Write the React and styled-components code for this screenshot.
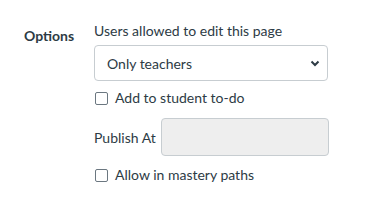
import React from 'react'
import styled, { createGlobalStyle } from 'styled-components'

const Global = createGlobalStyle`
  html, body { margin: 0; padding: 0; background: #fff; }
  body { font-family: Lato, "Liberation Sans", sans-serif; color: #2d3b45; }
`

const Page = styled.div`
  display: flex;
  padding: 21px 0 0 24px;
  font-size: 14px;
`

const SideLabel = styled.div`
  width: 70px;
  font-weight: bold;
  padding-top: 5px;
  line-height: 20px;
`

const Column = styled.div`
  width: 234px;
  display: flex;
  flex-direction: column;
`

const Heading = styled.div`
  line-height: 20px;
  margin-bottom: 4px;
`

const SelectWrap = styled.div`
  position: relative;
  height: 36px;
`

const Select = styled.select`
  appearance: none;
  width: 100%;
  height: 36px;
  box-sizing: border-box;
  border: 1px solid #c7cdd1;
  border-radius: 4px;
  background: #fff;
  padding: 0 30px 0 12px;
  font: inherit;
  font-size: 14px;
  color: #2d3b45;
  outline: none;
`

const Chevron = styled.svg`
  position: absolute;
  right: 8px;
  top: 15px;
  pointer-events: none;
`

const CheckRow = styled.label`
  display: flex;
  align-items: center;
  gap: 7px;
  height: 14px;
  margin-top: ${p => p.$top}px;
  line-height: 14px;
`

const Box = styled.input`
  appearance: none;
  margin: 0 0 0 1px;
  width: 13px;
  height: 13px;
  box-sizing: border-box;
  border: 1px solid #6b7780;
  border-radius: 2px;
  background: #fff;
`

const FieldRow = styled.div`
  display: flex;
  align-items: center;
  gap: 5px;
  margin-top: 13px;
  height: 38px;
`

const FieldLabel = styled.span`
  white-space: nowrap;
  flex-shrink: 0;
`

const TextInput = styled.input`
  width: 168px;
  height: 38px;
  flex-shrink: 0;
  box-sizing: border-box;
  border: 1px solid #c7cdd1;
  border-radius: 4px;
  background: #eeeeee;
  font: inherit;
  outline: none;
`

export default function App() {
  return (
    <>
      <Global />
      <Page>
        <SideLabel>Options</SideLabel>
        <Column>
          <Heading>Users allowed to edit this page</Heading>
          <SelectWrap>
            <Select defaultValue="teachers">
              <option value="teachers">Only teachers</option>
              <option value="all">Teachers and students</option>
            </Select>
            <Chevron width="10" height="7" viewBox="0 0 10 7">
              <path d="M1.5 1.5 L5 5 L8.5 1.5" fill="none" stroke="#2d3b45" strokeWidth="2" />
            </Chevron>
          </SelectWrap>
          <CheckRow $top={10}>
            <Box type="checkbox" />
            Add to student to-do
          </CheckRow>
          <FieldRow>
            <FieldLabel>Publish At</FieldLabel>
            <TextInput type="text" />
          </FieldRow>
          <CheckRow $top={12}>
            <Box type="checkbox" />
            Allow in mastery paths
          </CheckRow>
        </Column>
      </Page>
    </>
  )
}
